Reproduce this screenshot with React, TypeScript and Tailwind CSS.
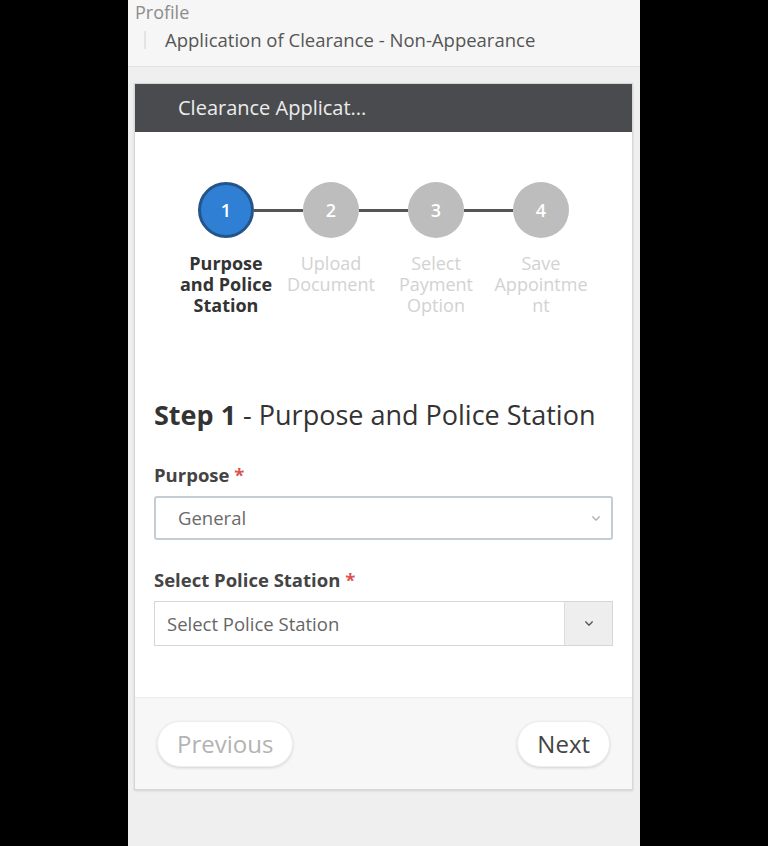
import React from 'react';

const steps = [
  { n: 1, label: 'Purpose and Police Station' },
  { n: 2, label: 'Upload Document' },
  { n: 3, label: 'Select Payment Option' },
  { n: 4, label: 'Save Appointment' },
];

const Chevron: React.FC<{ className?: string }> = ({ className }) => (
  <svg viewBox="0 0 12 8" className={className} fill="none" stroke="currentColor" strokeWidth="1.6" strokeLinecap="round" strokeLinejoin="round">
    <path d="M2 2l4 4 4-4" />
  </svg>
);

const App: React.FC = () => {
  const current = 1;

  return (
    <div className="w-full h-[846px] bg-black flex justify-center overflow-hidden" style={{ fontFamily: '"Open Sans", "Noto Sans", sans-serif' }}>
      <div className="w-[512px] h-full bg-[#efefef] flex flex-col">
        {/* Breadcrumb */}
        <div className="h-[67px] bg-[#f6f6f6] border-b border-[#e2e2e2] pl-[7px] flex flex-col">
          <div className="text-[18px] leading-[24px] text-[#8c8c8c]">Profile</div>
          <div className="flex items-center mt-[3px]">
            <span className="w-[2px] h-[18px] bg-[#e4e4e4] ml-[9px]"></span>
            <span className="ml-[19px] text-[18.5px] leading-[26px] text-[#555]">Application of Clearance - Non-Appearance</span>
          </div>
        </div>

        {/* Card */}
        <div className="mt-[16px] ml-[6px] w-[499px] bg-white border border-[#d6d6d6] shadow-[0_1px_2px_rgba(0,0,0,0.12)] flex flex-col">
          <div className="h-[48px] bg-[#4a4b4e] flex items-center pl-[43px] text-[20px] text-[#ececec]">
            Clearance Applicat...
          </div>

          {/* Stepper */}
          <div className="pt-[50px] flex flex-col items-center">
            <div className="flex items-center">
              {steps.map((s, i) => (
                <React.Fragment key={s.n}>
                  <div
                    className={
                      s.n === current
                        ? 'w-[56px] h-[56px] rounded-full bg-[#2f7fd4] border-[3px] border-[#23548a] flex items-center justify-center text-white text-[18px] font-semibold'
                        : 'w-[56px] h-[56px] rounded-full bg-[#bdbdbd] flex items-center justify-center text-white text-[18px] font-semibold'
                    }
                  >
                    {s.n}
                  </div>
                  {i < steps.length - 1 && <div className="w-[49px] h-[3px] bg-[#555]"></div>}
                </React.Fragment>
              ))}
            </div>
            <div className="grid grid-cols-4 w-[420px] mt-[15px] text-center text-[18px] leading-[21px]">
              {steps.map(s => (
                <div
                  key={s.n}
                  className={s.n === current ? 'px-[4px] font-bold text-[#333] break-words' : 'px-[4px] text-[#d2d2d2] break-words'}
                >
                  {s.label}
                </div>
              ))}
            </div>
          </div>

          {/* Form */}
          <div className="px-[19px] pt-[83px] pb-[51px]">
            <h2 className="text-[27px] leading-[32px] text-[#333]">
              <span className="font-bold">Step 1</span> - Purpose and Police Station
            </h2>

            <label className="block mt-[32px] text-[18.5px] leading-[24px] font-bold text-[#444]">
              Purpose <span className="text-[#d9534f]">*</span>
            </label>
            <div className="mt-[9px] h-[44px] border-2 border-[#c4ccd6] rounded-[3px] flex items-center justify-between pl-[22px] pr-[10px]">
              <span className="text-[18.5px] text-[#6a6a6a]">General</span>
              <Chevron className="w-[10px] h-[7px] text-[#b0b0b0]" />
            </div>

            <label className="block mt-[28px] text-[18.5px] leading-[24px] font-bold text-[#444]">
              Select Police Station <span className="text-[#d9534f]">*</span>
            </label>
            <div className="mt-[9px] h-[45px] border border-[#d6d6d6] flex">
              <div className="flex-1 flex items-center pl-[12px] text-[18.5px] text-[#666]">Select Police Station</div>
              <div className="w-[48px] bg-[#eeeeee] border-l border-[#dcdcdc] flex items-center justify-center">
                <Chevron className="w-[10px] h-[7px] text-[#555]" />
              </div>
            </div>
          </div>

          {/* Footer */}
          <div className="h-[92px] bg-[#f7f7f7] border-t border-[#ececec] flex items-center justify-between px-[22px]">
            <button className="h-[46px] px-[19px] rounded-full bg-white shadow-[0_1px_3px_rgba(0,0,0,0.15)] border border-[#eeeeee] text-[24px] text-[#b3b3b3]">
              Previous
            </button>
            <button className="h-[46px] px-[19px] rounded-full bg-white shadow-[0_1px_3px_rgba(0,0,0,0.15)] border border-[#eeeeee] text-[24px] text-[#444]">
              Next
            </button>
          </div>
        </div>
      </div>
    </div>
  );
};

export default App;
